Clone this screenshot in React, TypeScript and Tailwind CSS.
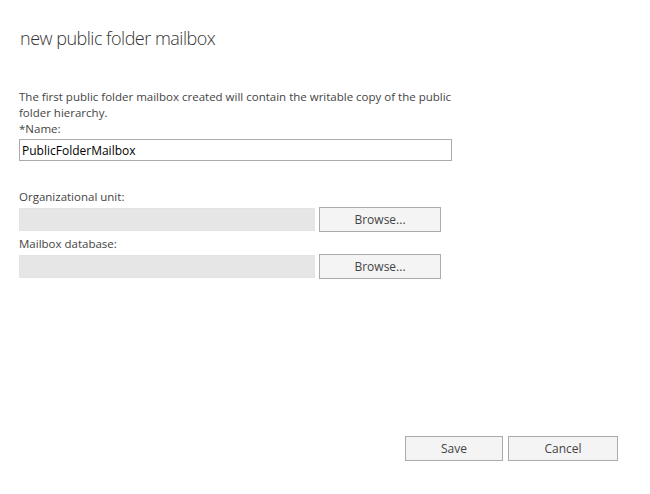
export default function App() {
  return (
    <div className="w-[650px] h-[494px] bg-white text-[#444444] font-['Open_Sans',sans-serif] flex flex-col">
      <h1 className="ml-[20px] mt-[26px] text-[18px] tracking-[-0.5px] font-light text-[#333333] leading-[24px]">
        new public folder mailbox
      </h1>

      <div className="ml-[19px] mt-[39px] w-[440px] text-[11.5px] leading-[16px]">
        <p>The first public folder mailbox created will contain the writable copy of the public folder hierarchy.</p>
        <label className="block">*Name:</label>
        <input
          defaultValue="PublicFolderMailbox"
          className="mt-[2px] w-[433px] h-[22px] border border-[#ababab] px-[2px] text-[12px] text-black outline-none"
        />

        <label className="block mt-[28px]">Organizational unit:</label>
        <div className="flex gap-[4px] mt-[2px] items-center">
          <div className="w-[296px] h-[23px] bg-[#e6e6e6] border border-[#e3e3e3]" />
          <button className="w-[122px] h-[25px] bg-[#f4f4f4] border border-[#ababab] text-[12px] text-[#444444]">
            Browse...
          </button>
        </div>

        <label className="block mt-[4px]">Mailbox database:</label>
        <div className="flex gap-[4px] mt-[2px] items-center">
          <div className="w-[296px] h-[23px] bg-[#e6e6e6] border border-[#e3e3e3]" />
          <button className="w-[122px] h-[25px] bg-[#f4f4f4] border border-[#ababab] text-[12px] text-[#444444]">
            Browse...
          </button>
        </div>
      </div>

      <div className="mt-auto mb-[33px] mr-[32px] flex justify-end gap-[5px]">
        <button className="w-[98px] h-[25px] bg-[#f4f4f4] border border-[#ababab] text-[12px] text-[#444444]">
          Save
        </button>
        <button className="w-[110px] h-[25px] bg-[#f4f4f4] border border-[#ababab] text-[12px] text-[#444444]">
          Cancel
        </button>
      </div>
    </div>
  )
}
